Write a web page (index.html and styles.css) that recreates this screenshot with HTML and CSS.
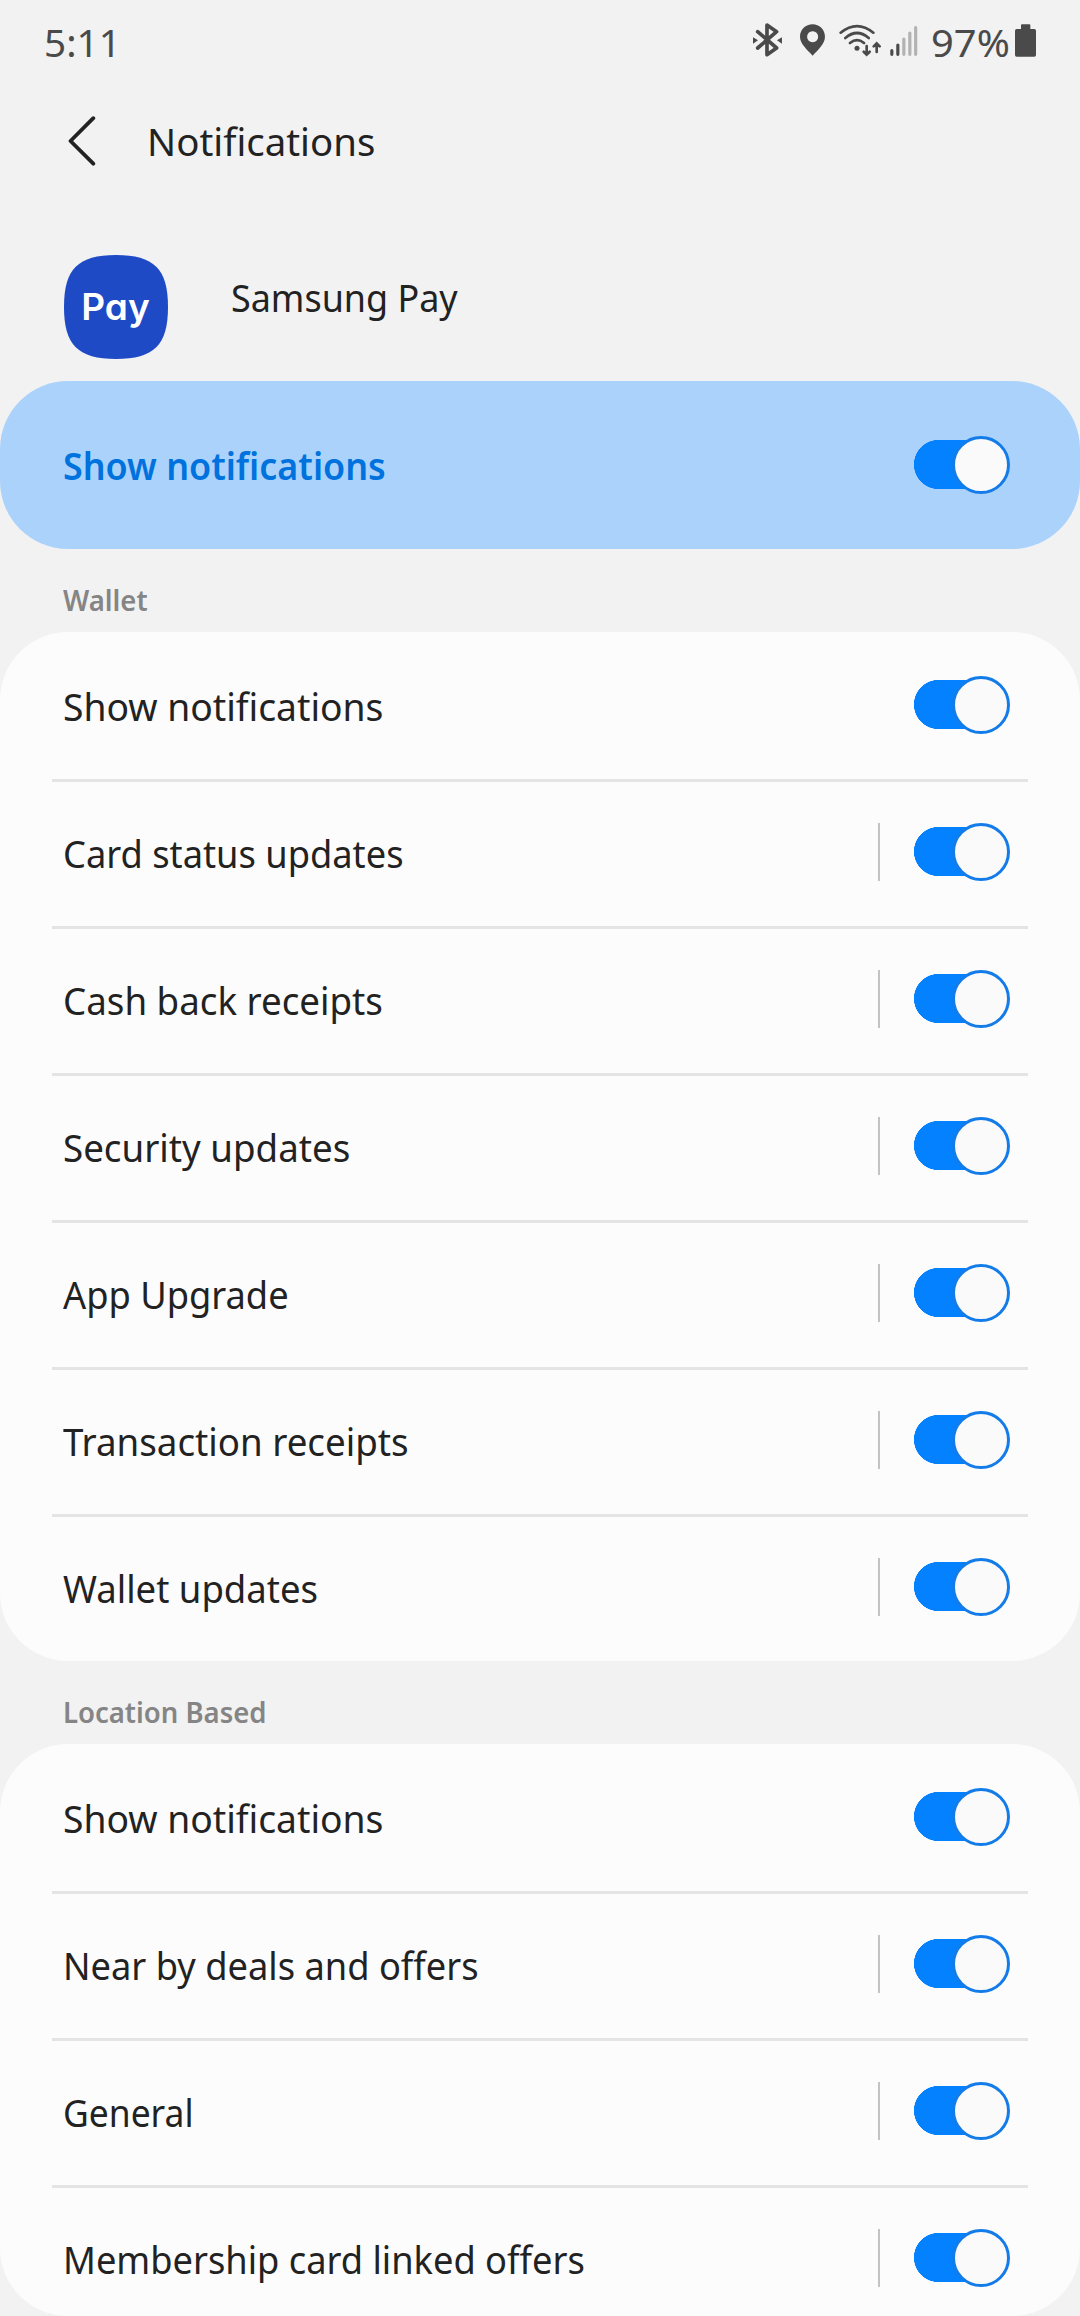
FILE: index.html
```html
<!DOCTYPE html>
<html lang="en">
<head>
<meta charset="utf-8">
<title>Notifications</title>
<link rel="stylesheet" href="styles.css">
</head>
<body>
<div class="screen">
  <div class="statusbar">
    <span class="clock">5:11</span>
    <div class="indicators">
      <svg class="icon-bluetooth" viewBox="39 40 88 102" fill="none" stroke="#4a4a4a">
        <path d="M53 66 L110 115 L81 135 V46 L110 66 L53 115" stroke-width="11" stroke-linejoin="round" stroke-linecap="round"/>
        <path d="M39 83 L54 92 L39 102Z M126 83 L111 92 L126 102Z" fill="#4a4a4a" stroke="none"/>
      </svg>
      <svg class="icon-location" viewBox="180 43 76 96">
        <path fill="#4a4a4a" fill-rule="evenodd" d="M218 44 C197 44 180 60 180 81 C180 103 203 121 218 138 C233 121 255 103 255 81 C255 60 238 44 218 44Z M218 65 A16.500 16.500 0 1 1 217.900 65Z"/>
      </svg>
      <svg class="icon-wifi" viewBox="298 42 128 98" fill="none" stroke="#4a4a4a" stroke-width="8" stroke-linecap="round">
        <path d="M303 68 Q352 28 401 68 M317 84 Q352 54 387 84 M331 99 Q352 82 373 99"/>
        <circle cx="352" cy="115" r="7.500" fill="#4a4a4a" stroke="none"/>
        <path d="M381 108 V134 M372 125 L381 134 L390 125 M411 126 V100 M402 109 L411 100 L420 109"/>
      </svg>
      <svg class="icon-signal" viewBox="449 49 84 90" stroke-width="9.500" stroke-linecap="round">
        <path stroke="#4a4a4a" d="M454.500 123 V134 M472.500 106 V134"/>
        <path stroke="#b2b2b2" d="M490.500 88 V134 M508.500 70 V134 M526 54 V134"/>
      </svg>
      <span class="battery-level">97%</span>
      <svg class="icon-battery" viewBox="825 41 63 99">
        <path fill="#4a4a4a" d="M846 42 H868 Q871 42 871 45 V56 H883 Q888 56 888 61 V134 Q888 139 883 139 H830 Q825 139 825 134 V61 Q825 56 830 56 H843 V45 Q843 42 846 42Z"/>
      </svg>
    </div>
  </div>

  <div class="appbar">
    <svg class="icon-back" viewBox="0 0 29 50" fill="none" stroke="#222" stroke-width="3.800" stroke-linecap="round" stroke-linejoin="round">
      <path d="M25.300 2.200 L2.500 25 L25.300 47.700"/>
    </svg>
    <h1 class="title">Notifications</h1>
  </div>

  <div class="app">
    <div class="app-icon">
      <svg class="app-shape" viewBox="0 0 104 104"><path fill="#1f4ac6" d="M52 0 C90 0 104 14 104 52 C104 90 90 104 52 104 C14 104 0 90 0 52 C0 14 14 0 52 0Z"/></svg>
      <span class="app-mark">Pay</span>
    </div>
    <span class="app-name">Samsung Pay</span>
  </div>

  <div class="master"><span class="label fit-94">Show notifications</span><span class="toggle"></span></div>

  <h2 class="section">Wallet</h2>
  <div class="card">
    <div class="row"><span class="label fit-98">Show notifications</span><span class="toggle"></span></div>
    <div class="row split"><span class="label">Card status updates</span><span class="toggle"></span></div>
    <div class="row split"><span class="label fit-97">Cash back receipts</span><span class="toggle"></span></div>
    <div class="row split"><span class="label fit-97">Security updates</span><span class="toggle"></span></div>
    <div class="row split"><span class="label">App Upgrade</span><span class="toggle"></span></div>
    <div class="row split"><span class="label fit-97">Transaction receipts</span><span class="toggle"></span></div>
    <div class="row split"><span class="label fit-96">Wallet updates</span><span class="toggle"></span></div>
  </div>

  <h2 class="section">Location Based</h2>
  <div class="card card-last">
    <div class="row"><span class="label fit-98">Show notifications</span><span class="toggle"></span></div>
    <div class="row split"><span class="label">Near by deals and offers</span><span class="toggle"></span></div>
    <div class="row split"><span class="label fit-93">General</span><span class="toggle"></span></div>
    <div class="row split"><span class="label">Membership card linked offers</span><span class="toggle"></span></div>
  </div>
</div>
</body>
</html>
```
FILE: styles.css
```css
*, *::before, *::after { box-sizing: border-box; }

body {
  margin: 0;
  background: #f2f2f2;
  color: #222;
  font-family: "Noto Sans", sans-serif;
  font-size: 38px;
}

svg { display: block; flex: none; }

.screen {
  width: 1080px;
  height: 2316px;
  overflow: hidden;
  display: flex;
  flex-direction: column;
}

.statusbar {
  display: flex;
  justify-content: space-between;
  height: 84px;
  padding: 0 44px;
  line-height: 84px;
  color: #4a4a4a;
}

.clock { transform: scaleX(1.020); transform-origin: left; }
.indicators { display: flex; align-items: flex-start; }

.icon-bluetooth { width: 29.300px; height: 34px; margin: 23px 17.700px 0 0; }
.icon-location { width: 25.300px; height: 32px; margin: 24px 14px 0 0; }
.icon-wifi { width: 42.700px; height: 32.700px; margin: 24px 7.700px 0 0; }
.icon-signal { width: 28px; height: 30px; margin: 26.300px 13.300px 0 0; }
.battery-level { width: 79px; margin-right: 5px; transform: scaleX(1.050); transform-origin: left; }
.icon-battery { width: 21px; height: 33px; margin: 23.700px 0 0; }

.appbar {
  display: flex;
  align-items: center;
  height: 114px;
  padding-left: 68px;
}

.icon-back { width: 29px; height: 50px; }
.title { margin: 0 0 0 50px; font-size: 38px; font-weight: 400; transform: scaleX(1.010); transform-origin: left; }

.app {
  display: flex;
  align-items: flex-start;
  height: 183px;
  padding: 56.500px 0 0 63.500px;
}

.app-icon { display: grid; width: 104px; height: 104px; }
.app-shape, .app-mark { grid-area: 1 / 1; }
.app-mark {
  z-index: 1;
  color: #fff;
  font: 600 37px/103px Inter, sans-serif;
  font-feature-settings: "cv11";
  text-align: center;
}

.app-name { margin-left: 63.500px; line-height: 84px; transform: scaleX(0.945); transform-origin: left; }

.master {
  display: flex;
  align-items: center;
  justify-content: space-between;
  height: 168px;
  padding: 0 70px 0 63px;
  border-radius: 68px;
  background: #abd2fb;
  color: #0072de;
  font-weight: 600;
}

.section {
  height: 83px;
  margin: 0;
  padding-left: 63px;
  color: #858585;
  font-size: 28px;
  font-weight: 600;
  line-height: 103px;
  transform: scaleX(0.982);
  transform-origin: 63px 0;
}

.card {
  padding: 0 52px;
  border-radius: 68px;
  background: #fcfcfc;
}

.card-last { height: 572px; }

.row {
  display: flex;
  align-items: center;
  height: 147px;
  padding: 0 18px 1px 11px;
}

.row + .row {
  background: linear-gradient(#e4e4e4, #e4e4e4) top / 100% 3px no-repeat;
}

.label {
  flex: 1;
  white-space: nowrap;
  transform: scaleX(0.954);
  transform-origin: left;
}

.row .label { padding-top: 2px; }

.fit-93 { transform: scaleX(0.932); }
.fit-94 { transform: scaleX(0.944); }
.fit-96 { transform: scaleX(0.961); }
.fit-97 { transform: scaleX(0.966); }
.fit-98 { transform: scaleX(0.980); }

.split .toggle::before {
  content: "";
  width: 2px;
  height: 58px;
  margin-left: -36px;
  background: #c3c3c3;
}

.toggle {
  display: flex;
  flex: none;
  align-items: center;
  width: 96px;
  height: 58px;
  background: linear-gradient(#0381fe, #0381fe) 25px 4px / 45px 49px no-repeat,
    radial-gradient(circle at 24.500px 28.500px, #0381fe 24.300px, transparent 24.800px);
}

.toggle::after {
  content: "";
  width: 58px;
  height: 58px;
  margin-left: auto;
  border: 3px solid #147ce8;
  border-radius: 50%;
  background: #fafafa;
}
```
